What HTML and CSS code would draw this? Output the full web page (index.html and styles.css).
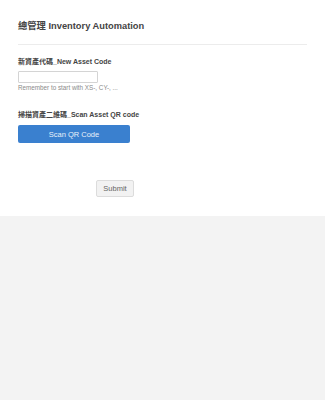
FILE: index.html
```html
<!DOCTYPE html>
<html>
<head>
<meta charset="utf-8">
<link rel="stylesheet" href="styles.css">
</head>
<body>
<div class="panel">
  <h1 class="title">總管理 Inventory Automation</h1>
  <hr class="rule">
  <div class="field">
    <label class="label">新資產代碼_New Asset Code</label>
    <input class="input" type="text">
    <div class="help">Remember to start with XS-, CY-, ...</div>
  </div>
  <div class="field field2">
    <label class="label">掃描資產二維碼_Scan Asset QR code</label>
    <button class="scan">Scan QR Code</button>
  </div>
  <div class="actions">
    <button class="submit">Submit</button>
  </div>
</div>
</body>
</html>
```
FILE: styles.css
```css
html, body {
  margin: 0;
  padding: 0;
  background: #f3f3f3;
  font-family: "Liberation Sans", Arial, "Noto Sans CJK TC", sans-serif;
}
.panel {
  background: #fff;
  height: 216px;
  box-sizing: border-box;
  padding: 19px 18px 0 18px;
}
.title {
  margin: 0;
  font-size: 9.3px;
  line-height: 14px;
  font-weight: bold;
  color: #444;
}
.rule {
  margin: 11px 0 0 0;
  border: 0;
  border-top: 1px solid #ececec;
  width: 289px;
}
.field {
  margin-top: 12px;
  display: flex;
  flex-direction: column;
  align-items: flex-start;
}
.field2 {
  margin-top: 18px;
}
.label {
  font-size: 7px;
  line-height: 10px;
  font-weight: bold;
  color: #444;
}
.input {
  margin-top: 4px;
  width: 80px;
  height: 12px;
  box-sizing: border-box;
  border: 1px solid #d4d4d4;
  border-radius: 1px;
  padding: 0;
  background: #fff;
}
.help {
  margin-top: 0;
  font-size: 6.3px;
  line-height: 9px;
  color: #8a8a8a;
}
.scan {
  margin-top: 5px;
  width: 112px;
  height: 18px;
  border: 0;
  border-radius: 2px;
  background: #3a80cf;
  color: #e8f0fa;
  font-family: inherit;
  font-size: 7.5px;
  padding: 0;
}
.actions {
  margin-top: 37px;
  display: flex;
  padding-left: 78px;
}
.submit {
  width: 38px;
  height: 17px;
  border: 1px solid #dcdcdc;
  border-radius: 2px;
  background: #f2f2f2;
  color: #666;
  font-family: inherit;
  font-size: 7.5px;
  padding: 0;
}
```
